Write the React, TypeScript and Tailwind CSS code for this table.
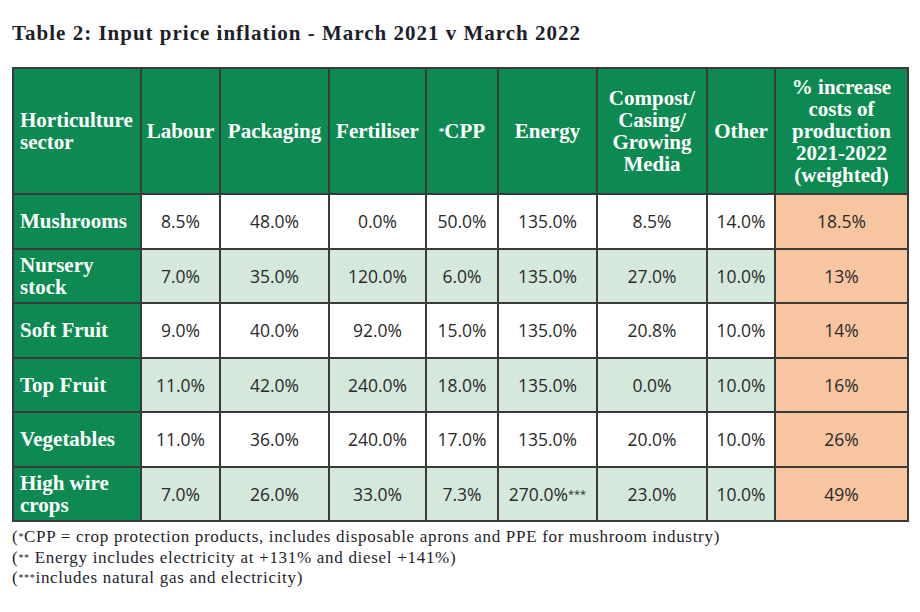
import React from "react";

const serif = { fontFamily: '"Liberation Serif", "Times New Roman", serif' };

type Row = { label: React.ReactNode; vals: React.ReactNode[]; total: string };

const rows: Row[] = [
  { label: "Mushrooms", vals: ["8.5%", "48.0%", "0.0%", "50.0%", "135.0%", "8.5%", "14.0%"], total: "18.5%" },
  { label: <>Nursery<br />stock</>, vals: ["7.0%", "35.0%", "120.0%", "6.0%", "135.0%", "27.0%", "10.0%"], total: "13%" },
  { label: "Soft Fruit", vals: ["9.0%", "40.0%", "92.0%", "15.0%", "135.0%", "20.8%", "10.0%"], total: "14%" },
  { label: "Top Fruit", vals: ["11.0%", "42.0%", "240.0%", "18.0%", "135.0%", "0.0%", "10.0%"], total: "16%" },
  { label: "Vegetables", vals: ["11.0%", "36.0%", "240.0%", "17.0%", "135.0%", "20.0%", "10.0%"], total: "26%" },
  {
    label: <>High wire<br />crops</>,
    vals: [
      "7.0%", "26.0%", "33.0%", "7.3%",
      <>270.0%<sup className="text-[11px] relative top-[-3px]">***</sup></>,
      "23.0%", "10.0%",
    ],
    total: "49%",
  },
];

const widths = [128, 79, 109, 97, 72, 99, 110, 68, 133];

export default function App() {
  return (
    <div className="w-[920px] h-[612px] bg-white text-[#222]">
      <div className="pl-[12px] pt-[20px]">
        <h1 style={serif} className="text-[21px] font-bold leading-[26px] tracking-[1px] text-[#1e1e2a]">
          Table 2: Input price inflation - March 2021 v March 2022
        </h1>
        <table className="mt-[21px] border-collapse border-2 border-[#3a3a3a] table-fixed w-[895px]">
          <colgroup>
            {widths.map((w, i) => (
              <col key={i} style={{ width: w }} />
            ))}
          </colgroup>
          <thead>
            <tr style={serif} className="h-[126px] bg-[#0d8a52] text-white text-[21px] font-bold leading-[22px]">
              <th className="border-2 border-[#3a3a3a] text-left px-[6px] font-bold">Horticulture<br />sector</th>
              <th className="border-2 border-[#3a3a3a] px-0 font-bold">Labour</th>
              <th className="border-2 border-[#3a3a3a] px-0 font-bold">Packaging</th>
              <th className="border-2 border-[#3a3a3a] px-0 font-bold">Fertiliser</th>
              <th className="border-2 border-[#3a3a3a] px-0 font-bold"><sup className="text-[11px] relative top-[-3px]">*</sup>CPP</th>
              <th className="border-2 border-[#3a3a3a] px-0 font-bold">Energy</th>
              <th className="border-2 border-[#3a3a3a] px-0 font-bold">Compost/<br />Casing/<br />Growing<br />Media</th>
              <th className="border-2 border-[#3a3a3a] px-0 font-bold">Other</th>
              <th className="border-2 border-[#3a3a3a] px-0 font-bold">% increase<br />costs of<br />production<br />2021-2022<br />(weighted)</th>
            </tr>
          </thead>
          <tbody>
            {rows.map((r, i) => {
              const bg = i % 2 === 0 ? "bg-white" : "bg-[#d4e8dc]";
              return (
                <tr key={i} className="h-[54.5px]">
                  <td style={serif} className="border-2 border-[#3a3a3a] bg-[#0d8a52] text-white text-[21px] font-bold leading-[22px] px-[6px]">
                    {r.label}
                  </td>
                  {r.vals.map((v, j) => (
                    <td
                      key={j}
                      style={{ fontFamily: '"Open Sans", sans-serif' }}
                      className={`border-2 border-[#3a3a3a] ${bg} text-center text-[17.5px] text-[#2a2a2a] whitespace-nowrap px-0`}
                    >
                      {v}
                    </td>
                  ))}
                  <td
                    style={{ fontFamily: '"Open Sans", sans-serif' }}
                    className="border-2 border-[#3a3a3a] bg-[#f7c5a0] text-center text-[17.5px] text-[#2a2a2a]"
                  >
                    {r.total}
                  </td>
                </tr>
              );
            })}
          </tbody>
        </table>
        <div style={serif} className="mt-[5px] text-[17px] leading-[20.5px] tracking-[0.7px] text-[#1e1e2a]">
          <p>(<sup className="text-[10px] relative top-[-2px]">*</sup>CPP = crop protection products, includes disposable aprons and PPE for mushroom industry)</p>
          <p>(<sup className="text-[10px] relative top-[-2px]">**</sup> Energy includes electricity at +131% and diesel +141%)</p>
          <p>(<sup className="text-[10px] relative top-[-2px]">***</sup>includes natural gas and electricity)</p>
        </div>
      </div>
    </div>
  );
}
